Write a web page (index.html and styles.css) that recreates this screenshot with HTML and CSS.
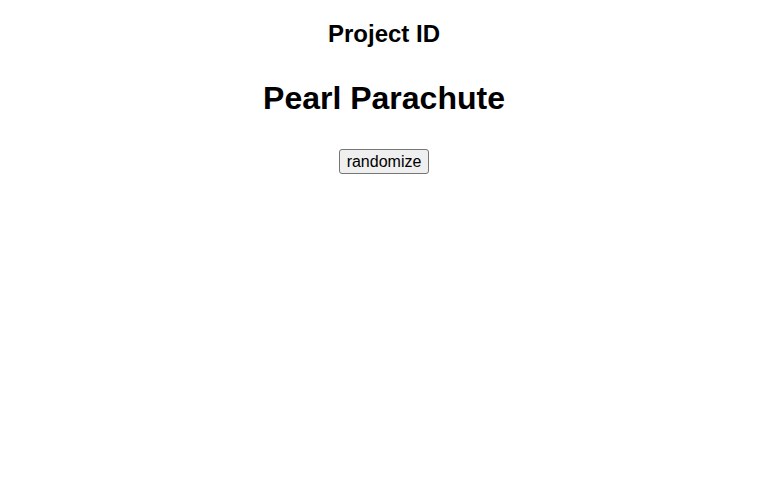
FILE: index.html
```html
<!DOCTYPE html>
<html lang="en">
<head>
    <meta charset="UTF-8">
    <meta name="viewport" content="width=device-width, initial-scale=1.0">
    <title>Project ID</title>
    <link rel="stylesheet" href="styles.css">
</head>
<body>
    <div class="main">
        <h2 class="label">Project ID</h2>
        <h1 class="name">Pearl Parachute</h1>
        <div class="actions">
            <button class="randomize">randomize</button>
        </div>
    </div>
</body>
</html>
```

FILE: styles.css
```css
body{
    margin:0;
    background:white;
    color:black;
    font-family:"Liberation Sans", Arial, sans-serif;
}

.main
{
    text-align:center;
    padding-top:20px;
}

.label
{
    font-size:24px;
    margin:0;
}

.name
{
    font-size:32px;
    margin:32px 0 0;
}

.actions
{
    margin-top:32px;
}

.randomize
{
    font-family:"Liberation Sans", Arial, sans-serif;
    font-size:16px;
    color:black;
    background:#efefef;
    border:1px solid #767676;
    border-radius:3px;
    padding:3px 7px 2px;
    cursor:pointer;
}
```
